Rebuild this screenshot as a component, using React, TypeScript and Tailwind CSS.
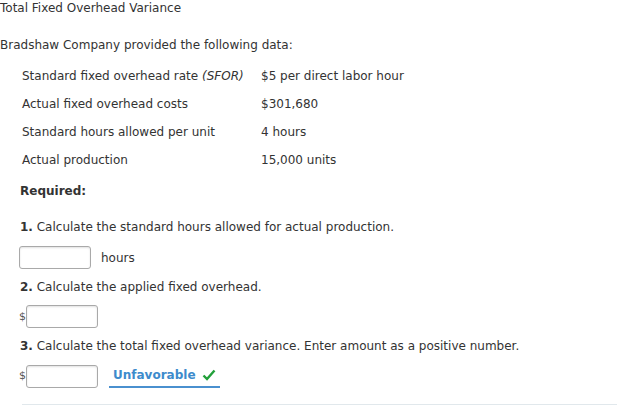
import React from "react";

const rows = [
  { label: "Standard fixed overhead rate", em: "(SFOR)", value: "$5 per direct labor hour" },
  { label: "Actual fixed overhead costs", value: "$301,680" },
  { label: "Standard hours allowed per unit", value: "4 hours" },
  { label: "Actual production", value: "15,000 units" },
];

function Box({ w = "w-[72px]" }: { w?: string }) {
  return <div className={`${w} h-[23px] border border-[#a9a9a9] rounded-[3px] bg-white shadow-[inset_0_1px_2px_rgba(0,0,0,0.12)]`} />;
}

export default function App() {
  return (
    <div className="w-[617px] h-[405px] overflow-hidden bg-white text-[#333] text-[12px] leading-[14px] font-['DejaVu_Sans',Verdana,sans-serif]">
      <div className="pt-[1px]">Total Fixed Overhead Variance</div>

      <div className="mt-[23px]">Bradshaw Company provided the following data:</div>

      {/* data table */}
      <div className="mt-[17px] ml-[22px] flex flex-col gap-[14px]">
        {rows.map((r) => (
          <div key={r.label} className="flex">
            <div className="w-[239px]">
              {r.label} {r.em && <i>{r.em}</i>}
            </div>
            <div>{r.value}</div>
          </div>
        ))}
      </div>

      <div className="ml-[20px] mt-[17px] font-bold">Required:</div>

      <div className="ml-[20px] mt-[22px]"><b>1.</b> Calculate the standard hours allowed for actual production.</div>
      <div className="ml-[19px] mt-[12px] flex items-center gap-[10px]">
        <Box />
        <span>hours</span>
      </div>

      <div className="ml-[20px] mt-[11px]"><b>2.</b> Calculate the applied fixed overhead.</div>
      <div className="ml-[19px] mt-[11px] flex items-center">
        <span className="text-[11px] text-[#555]">$</span>
        <Box />
      </div>

      <div className="ml-[20px] mt-[11px]"><b>3.</b> Calculate the total fixed overhead variance. Enter amount as a positive number.</div>
      <div className="ml-[19px] mt-[11px] flex items-center">
        <span className="text-[11px] text-[#555]">$</span>
        <Box />
        <div className="ml-[11px] w-[111px] h-[24px] border-b-[2px] border-[#4a90cf] flex items-center pl-[4px] gap-[6px]">
          <span className="font-bold text-[#3d8bcc]">Unfavorable</span>
          <svg width="14" height="12" viewBox="0 0 14 12">
            <path d="M1.5 6.5 L5 10 L12.5 1.5" fill="none" stroke="#22a03a" strokeWidth="2.4" />
          </svg>
        </div>
      </div>

      <div className="ml-[22px] mt-[16px] h-[6px] bg-[#e1e8ec]" />
    </div>
  );
}
